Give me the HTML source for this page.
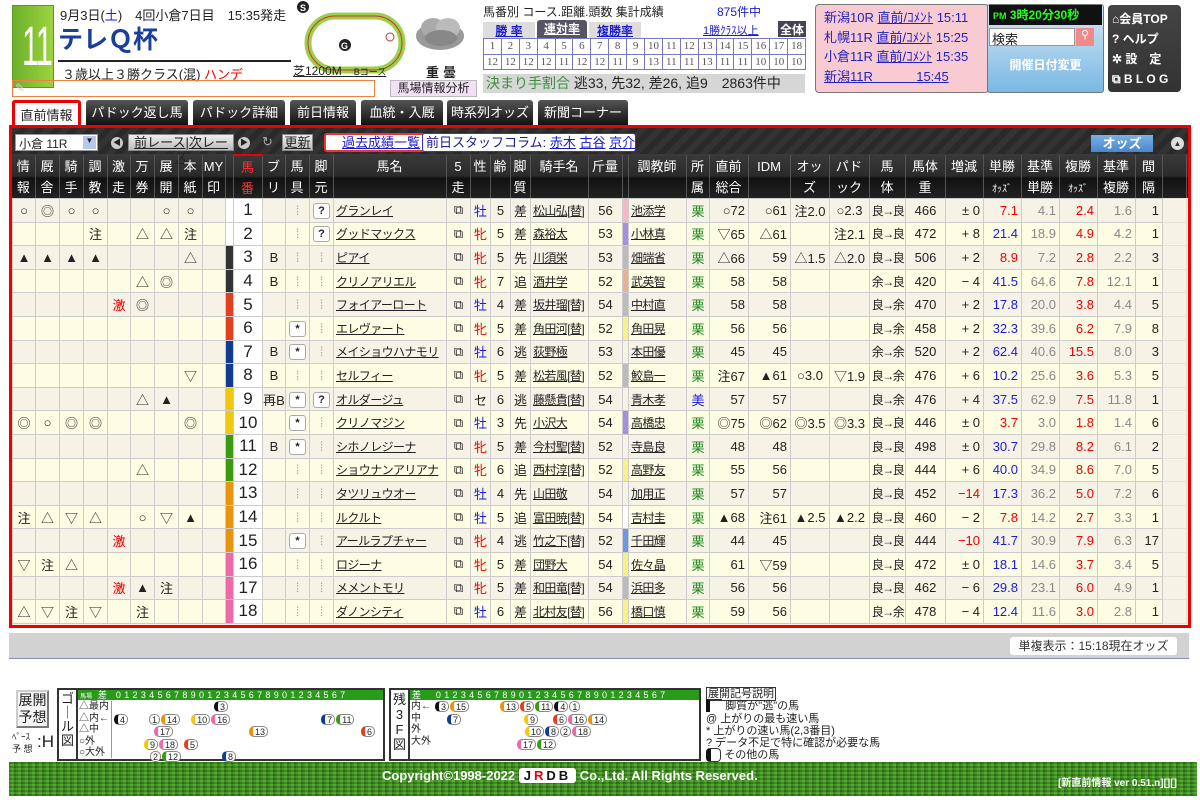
<!DOCTYPE html>
<html><head><meta charset="utf-8">
<style>
*{box-sizing:border-box;margin:0;padding:0}
body{width:1200px;height:800px;overflow:hidden;background:#fff;font-family:"Liberation Sans","Noto Sans CJK JP",sans-serif;font-size:13px;color:#222;position:relative}
.a{position:absolute}
.lk{color:#1a1ad0;text-decoration:underline}
table{border-collapse:collapse;table-layout:fixed}
#main td{border:1px solid #ccc;height:23.6px;text-align:center;white-space:nowrap;overflow:hidden;padding:0;font-size:13px}
#main tr.e td{background:#fdfde4}
#main td.n{text-align:left;padding-left:2px;text-decoration:underline;font-size:12px;letter-spacing:-0.6px}
#main td.r{text-align:right;padding-right:3px}
#main td.t{font-size:12px;letter-spacing:-1.5px}
#main td.num{font-size:17px;background:#fff!important}
#main td.bl{background:#f6f3e6!important;border-color:#e6e2d2}
.d{color:#aaa;font-size:11px}
.bx{display:inline-block;width:17px;height:16px;border:1px solid #aaa;border-radius:3px;font-size:11px;line-height:14px;background:#fff;font-weight:bold}
.b{color:#1a1ae0}.rd{color:#e00}.g{color:#888}.gr{color:#1b8a1b}
#hd td{color:#fff;text-align:center;font-size:13px;line-height:21px;height:44px;border-right:1px solid #555;vertical-align:top;padding-top:1px;white-space:nowrap}
.tab{position:absolute;top:100px;height:25px;background:linear-gradient(#555,#111);color:#fff;border-radius:3px 3px 0 0;text-align:center;line-height:25px;font-size:13px}
.gc td{border:1px solid #7777bb;width:17.9px;height:15.5px;text-align:center;font-size:11px;color:#555;font-family:"Liberation Serif",serif}
.pill{display:inline-block;height:11px;font-size:9px;line-height:10px;border:1px solid #888;border-radius:5px;padding:0 2px;margin-right:1px;background:#fff}
</style></head><body>

<!-- header left -->
<div class="a" style="left:12px;top:5px;width:42px;height:83px;background:linear-gradient(90deg,#6db02a,#9bd43f);border:1px solid #5a9a20;overflow:hidden"><div style="color:#fff;font-size:56px;line-height:80px;text-align:center;transform:scaleX(0.55);letter-spacing:-2px">11</div></div>
<div class="a" style="left:60px;top:5px;font-size:13px">9月3日(<span class="b">土</span>)　4回小倉7日目　15:35発走</div>
<div class="a" style="left:58px;top:20px;font-size:25px;font-weight:bold;color:#1a3f9a">テレＱ杯</div>
<div class="a" style="left:58px;top:60px;width:233px;height:2px;background:#222"></div>
<div class="a" style="left:62px;top:64px;font-size:13px">３歳以上３勝クラス(混) <span class="rd">ハンデ</span></div>
<div class="a" style="left:12px;top:80px;width:363px;height:17px;border:1px solid #f08040;color:#ccc;font-size:12px;padding-left:2px">✎</div>
<div class="a" style="left:390px;top:80px;width:87px;height:17px;background:#f2e0f4;border:1px solid #bbb;font-size:12px;text-align:center;line-height:15px">馬場情報分析</div>
<!-- course -->
<svg class="a" style="left:292px;top:0" width="130" height="80">
<rect x="16" y="16" width="94" height="54" rx="27" fill="none" stroke="#9ad04a" stroke-width="7"/>
<rect x="16" y="16" width="94" height="54" rx="27" fill="none" stroke="#c33" stroke-width="1"/>
<circle cx="11" cy="7" r="6" fill="#222"/><text x="8" y="11" fill="#fff" font-size="9" font-weight="bold">S</text>
<circle cx="53" cy="45" r="6" fill="#222"/><text x="49" y="49" fill="#fff" font-size="9" font-weight="bold">G</text>
<circle cx="98" cy="37" r="4" fill="none" stroke="#c33"/>
</svg>
<div class="a" style="left:293px;top:62px;font-size:12px;text-decoration:underline">芝1200M　<span style="font-size:9px">Bコース</span></div>
<svg class="a" style="left:413px;top:14px" width="55" height="40"><ellipse cx="27" cy="22" rx="24" ry="14" fill="#999"/><ellipse cx="20" cy="14" rx="12" ry="10" fill="#aaa"/><ellipse cx="35" cy="14" rx="12" ry="10" fill="#bbb"/><ellipse cx="28" cy="24" rx="16" ry="8" fill="#888"/></svg>
<div class="a" style="left:426px;top:62px;font-size:13px;font-weight:bold;letter-spacing:4px">重曇</div>

<!-- stats -->
<div class="a" style="left:483px;top:3px;font-size:12px">馬番別 コース.距離.頭数 集計成績</div>
<div class="a" style="left:717px;top:3px;font-size:12px;color:#1a1ad0">875件中</div>
<div class="a lk" style="left:483px;top:22px;width:52px;height:16px;background:#ddd;text-align:center;font-size:12px;font-weight:bold">勝 率</div>
<div class="a" style="left:537px;top:20px;width:50px;height:18px;background:#556;color:#fff;text-align:center;font-size:12px;font-weight:bold;border-radius:3px 3px 0 0;text-decoration:underline">連対率</div>
<div class="a lk" style="left:589px;top:22px;width:52px;height:16px;background:#ddd;text-align:center;font-size:12px;font-weight:bold">複勝率</div>
<div class="a lk" style="left:703px;top:22px;font-size:11px">1勝ｸﾗｽ以上</div>
<div class="a" style="left:778px;top:21px;width:28px;height:16px;background:#445;color:#fff;font-size:12px;text-align:center;font-weight:bold">全体</div>
<table class="a gc" style="left:483px;top:38px;width:322px"><tr><td>1</td><td>2</td><td>3</td><td>4</td><td>5</td><td>6</td><td>7</td><td>8</td><td>9</td><td>10</td><td>11</td><td>12</td><td>13</td><td>14</td><td>15</td><td>16</td><td>17</td><td>18</td></tr><tr><td>12</td><td>12</td><td>12</td><td>12</td><td>11</td><td>12</td><td>12</td><td>11</td><td>9</td><td>13</td><td>11</td><td>11</td><td>13</td><td>11</td><td>11</td><td>10</td><td>10</td><td>10</td></tr></table>
<div class="a" style="left:483px;top:74px;width:322px;height:19px;background:#d6d6d6;font-size:14px;line-height:19px;padding-left:3px;white-space:nowrap"><span style="color:#3b8f3b">決まり手割合</span> 逃33, 先32, 差26, 追9　2863件中</div>

<!-- pink box -->
<div class="a" style="left:815px;top:4px;width:174px;height:89px;background:#f8cbd3;border:1px solid #777;border-radius:4px;font-size:13px;color:#2222c0;line-height:19.5px;padding:3px 0 0 8px;white-space:pre">新潟10R <u>直前/ｺﾒﾝﾄ</u> 15:11
札幌11R <u>直前/ｺﾒﾝﾄ</u> 15:25
小倉11R <u>直前/ｺﾒﾝﾄ</u> 15:35
<u>新潟11R            15:45</u></div>
<div class="a" style="left:987px;top:4px;width:117px;height:89px;background:linear-gradient(#d6e8f6,#7ab8e4);border:1px solid #777;border-radius:3px"></div>
<div class="a" style="left:989px;top:5px;width:113px;height:20px;background:#111;color:#2f2;font-size:12px;font-weight:bold;line-height:20px;padding-left:4px"><span style="font-size:9px">PM</span> 3時20分30秒</div>
<div class="a" style="left:989px;top:28px;width:86px;height:18px;background:#fff;border:1px solid #999;font-size:13px;padding-left:2px">検索</div>
<div class="a" style="left:1076px;top:28px;width:18px;height:18px;background:#f08a8a;color:#fff;font-size:11px;text-align:center">⚲</div>
<div class="a" style="left:989px;top:56px;width:113px;text-align:center;color:#fff;font-size:12px;font-weight:bold">開催日付変更</div>
<div class="a" style="left:1108px;top:5px;width:73px;height:87px;background:linear-gradient(#444,#333);border-radius:4px;color:#fff;font-size:12px;font-weight:bold;line-height:20px;padding:4px 0 0 4px;white-space:pre">⌂会員TOP
? ヘルプ
✲ 設　定
⧉ B L O G</div>

<!-- tabs -->
<div class="tab" style="left:12px;width:69px;background:#fff;color:#222;border:3px solid #e00;border-bottom:none;height:28px">直前情報</div>
<div class="tab" style="left:86px;width:102px">パドック返し馬</div>
<div class="tab" style="left:193px;width:92px">パドック詳細</div>
<div class="tab" style="left:290px;width:66px">前日情報</div>
<div class="tab" style="left:361px;width:82px">血統・入厩</div>
<div class="tab" style="left:447px;width:86px">時系列オッズ</div>
<div class="tab" style="left:538px;width:90px">新聞コーナー</div>

<!-- frame -->
<div class="a" style="left:9px;top:125px;width:1182px;height:503px;border:3px solid #e00;background:#f6f3e6"></div>
<div class="a" style="left:12px;top:128px;width:1176px;height:70px;background:repeating-linear-gradient(135deg,#333 0 6px,#2a2a2a 6px 12px)"></div>
<div class="a" style="left:12px;top:154px;width:1176px;height:44px;background:linear-gradient(#3a3a3a 0,#2a2a2a 50%,#111 55%,#222 100%)"></div>
<div class="a" style="left:15px;top:134px;width:83px;height:17px;background:#fff;border:1px solid #999;font-size:12px;padding-left:3px">小倉 11R<span style="position:absolute;right:1px;top:1px;width:13px;height:13px;background:#b8c8e8;font-size:8px;text-align:center">▼</span></div>
<div class="a" style="left:111px;top:137px;width:12px;height:12px;border-radius:6px;background:#ccc;font-size:8px;text-align:center;line-height:12px">◀</div>
<div class="a" style="left:128px;top:134px;width:106px;height:17px;background:linear-gradient(#eee,#bbb);border:1px solid #888;font-size:13px;text-align:center;line-height:15px"><u>前レース</u>|<u>次レース</u></div>
<div class="a" style="left:238px;top:137px;width:12px;height:12px;border-radius:6px;background:#ccc;font-size:8px;text-align:center;line-height:12px">▶</div>
<div class="a" style="left:262px;top:134px;color:#aaa;font-size:13px">↻</div>
<div class="a" style="left:282px;top:134px;width:31px;height:17px;background:linear-gradient(#eee,#bbb);border:1px solid #888;font-size:13px;text-align:center;line-height:15px"><u>更新</u></div>
<div class="a lk" style="left:324px;top:133px;width:114px;height:19px;background:#fff;border:2px solid #e33;border-radius:3px;font-size:13px;text-align:center;line-height:15px">過去成績一覧</div>
<div class="a" style="left:422px;top:133px;width:214px;height:19px;background:#fff;border:1px solid #33c;border-radius:3px;font-size:13px;color:#1a1a90;padding-left:3px;line-height:17px;white-space:nowrap">前日スタッフコラム: <span class="lk">赤木</span> <span class="lk">古谷</span> <span class="lk">京介</span></div>
<div class="a" style="left:1091px;top:135px;width:62px;height:17px;background:linear-gradient(#7ab0e6,#4a86cc);color:#fff;font-weight:bold;text-align:center;font-size:13px;line-height:17px">オッズ</div>
<div class="a" style="left:1171px;top:137px;width:13px;height:13px;border-radius:7px;background:#ddd;font-size:8px;text-align:center;line-height:13px;color:#333">▲</div>

<table id="hd" class="a" style="left:12px;top:154px;width:1174px">
<colgroup><col style="width:23px"><col style="width:24px"><col style="width:24px"><col style="width:24px"><col style="width:23px"><col style="width:24px"><col style="width:24px"><col style="width:24px"><col style="width:23px"><col style="width:8px"><col style="width:29px"><col style="width:23px"><col style="width:24px"><col style="width:24px"><col style="width:113px"><col style="width:24px"><col style="width:20px"><col style="width:20px"><col style="width:20px"><col style="width:58px"><col style="width:34px"><col style="width:6px"><col style="width:58px"><col style="width:23px"><col style="width:39px"><col style="width:42px"><col style="width:39px"><col style="width:40px"><col style="width:36px"><col style="width:40px"><col style="width:38px"><col style="width:38px"><col style="width:38px"><col style="width:38px"><col style="width:38px"><col style="width:27px"><col style="width:24px"></colgroup>
<tr><td>情<br>報</td><td>厩<br>舎</td><td>騎<br>手</td><td>調<br>教</td><td>激<br>走</td><td>万<br>券</td><td>展<br>開</td><td>本<br>紙</td><td>MY<br>印</td><td></td><td style="color:#f33;border-top:2px solid #e00;border-bottom:2px solid #e00">馬<br>番</td><td>ブ<br>リ</td><td>馬<br>具</td><td>脚<br>元</td><td>馬名</td><td>5<br>走</td><td>性</td><td>齢</td><td>脚<br>質</td><td>騎手名</td><td>斤量</td><td></td><td>調教師</td><td>所<br>属</td><td>直前<br>総合</td><td>IDM</td><td>オッ<br>ズ</td><td>パド<br>ック</td><td>馬<br>体</td><td>馬体<br>重</td><td>増減</td><td>単勝<br><span style="font-size:10px">ｵｯｽﾞ</span></td><td>基準<br>単勝</td><td>複勝<br><span style="font-size:10px">ｵｯｽﾞ</span></td><td>基準<br>複勝</td><td>間<br>隔</td><td></td></tr></table>

<table id="main" class="a" style="left:12px;top:198px;width:1174px">
<colgroup><col style="width:23px"><col style="width:24px"><col style="width:24px"><col style="width:24px"><col style="width:23px"><col style="width:24px"><col style="width:24px"><col style="width:24px"><col style="width:23px"><col style="width:8px"><col style="width:29px"><col style="width:23px"><col style="width:24px"><col style="width:24px"><col style="width:113px"><col style="width:24px"><col style="width:20px"><col style="width:20px"><col style="width:20px"><col style="width:58px"><col style="width:34px"><col style="width:6px"><col style="width:58px"><col style="width:23px"><col style="width:39px"><col style="width:42px"><col style="width:39px"><col style="width:40px"><col style="width:36px"><col style="width:40px"><col style="width:38px"><col style="width:38px"><col style="width:38px"><col style="width:38px"><col style="width:38px"><col style="width:27px"><col style="width:24px"></colgroup>
<tr><td>○</td><td>◎</td><td>○</td><td>○</td><td></td><td></td><td>○</td><td>○</td><td></td><td style="background:#fff"></td><td class="num">1</td><td></td><td class="d">⁞</td><td><span class="bx">?</span></td><td class="n">グランレイ</td><td>⧉</td><td class="b">牡</td><td>5</td><td>差</td><td class="n">松山弘[替]</td><td>56</td><td style="background:#f4b8c8"></td><td class="n">池添学</td><td class="gr">栗</td><td class="r">○72</td><td class="r">○61</td><td>注2.0</td><td>○2.3</td><td class="t">良→良</td><td>466</td><td class="r">± 0</td><td class="r rd">7.1</td><td class="r g">4.1</td><td class="r rd">2.4</td><td class="r g">1.6</td><td class="r">1</td><td class="bl"></td></tr>
<tr class="e"><td></td><td></td><td></td><td>注</td><td></td><td>△</td><td>△</td><td>注</td><td></td><td style="background:#fff!important"></td><td class="num">2</td><td></td><td class="d">⁞</td><td><span class="bx">?</span></td><td class="n">グッドマックス</td><td>⧉</td><td class="rd">牝</td><td>5</td><td>差</td><td class="n">森裕太</td><td>53</td><td style="background:#a58fe0!important"></td><td class="n">小林真</td><td class="gr">栗</td><td class="r">▽65</td><td class="r">△61</td><td></td><td>注2.1</td><td class="t">良→良</td><td>472</td><td class="r">+ 8</td><td class="r b">21.4</td><td class="r g">18.9</td><td class="r rd">4.9</td><td class="r g">4.2</td><td class="r">1</td><td class="bl"></td></tr>
<tr><td>▲</td><td>▲</td><td>▲</td><td>▲</td><td></td><td></td><td></td><td>△</td><td></td><td style="background:#333"></td><td class="num">3</td><td>B</td><td class="d">⁞</td><td class="d">⁞</td><td class="n">ピアイ</td><td>⧉</td><td class="rd">牝</td><td>5</td><td>先</td><td class="n">川須栄</td><td>53</td><td style="background:#bbb"></td><td class="n">畑端省</td><td class="gr">栗</td><td class="r">△66</td><td class="r">59</td><td>△1.5</td><td>△2.0</td><td class="t">良→良</td><td>506</td><td class="r">+ 2</td><td class="r rd">8.9</td><td class="r g">7.2</td><td class="r rd">2.8</td><td class="r g">2.2</td><td class="r">3</td><td class="bl"></td></tr>
<tr class="e"><td></td><td></td><td></td><td></td><td></td><td>△</td><td>◎</td><td></td><td></td><td style="background:#333!important"></td><td class="num">4</td><td>B</td><td class="d">⁞</td><td class="d">⁞</td><td class="n">クリノアリエル</td><td>⧉</td><td class="rd">牝</td><td>7</td><td>追</td><td class="n">酒井学</td><td>52</td><td style="background:#e8b090!important"></td><td class="n">武英智</td><td class="gr">栗</td><td class="r">58</td><td class="r">58</td><td></td><td></td><td class="t">余→良</td><td>420</td><td class="r">− 4</td><td class="r b">41.5</td><td class="r g">64.6</td><td class="r rd">7.8</td><td class="r g">12.1</td><td class="r">1</td><td class="bl"></td></tr>
<tr><td></td><td></td><td></td><td></td><td class="rd">激</td><td>◎</td><td></td><td></td><td></td><td style="background:#e04020"></td><td class="num">5</td><td></td><td class="d">⁞</td><td class="d">⁞</td><td class="n">フォイアーロート</td><td>⧉</td><td class="b">牡</td><td>4</td><td>差</td><td class="n">坂井瑠[替]</td><td>54</td><td style="background:#bbb"></td><td class="n">中村直</td><td class="gr">栗</td><td class="r">58</td><td class="r">58</td><td></td><td></td><td class="t">良→余</td><td>470</td><td class="r">+ 2</td><td class="r b">17.8</td><td class="r g">20.0</td><td class="r rd">3.8</td><td class="r g">4.4</td><td class="r">5</td><td class="bl"></td></tr>
<tr class="e"><td></td><td></td><td></td><td></td><td></td><td></td><td></td><td></td><td></td><td style="background:#e04020!important"></td><td class="num">6</td><td></td><td><span class="bx">*</span></td><td class="d">⁞</td><td class="n">エレヴァート</td><td>⧉</td><td class="rd">牝</td><td>5</td><td>差</td><td class="n">角田河[替]</td><td>52</td><td style="background:#f8f088!important"></td><td class="n">角田晃</td><td class="gr">栗</td><td class="r">56</td><td class="r">56</td><td></td><td></td><td class="t">良→余</td><td>458</td><td class="r">+ 2</td><td class="r b">32.3</td><td class="r g">39.6</td><td class="r rd">6.2</td><td class="r g">7.9</td><td class="r">8</td><td class="bl"></td></tr>
<tr><td></td><td></td><td></td><td></td><td></td><td></td><td></td><td></td><td></td><td style="background:#123c94"></td><td class="num">7</td><td>B</td><td><span class="bx">*</span></td><td class="d">⁞</td><td class="n">メイショウハナモリ</td><td>⧉</td><td class="b">牡</td><td>6</td><td>逃</td><td class="n">荻野極</td><td>53</td><td></td><td class="n">本田優</td><td class="gr">栗</td><td class="r">45</td><td class="r">45</td><td></td><td></td><td class="t">余→余</td><td>520</td><td class="r">+ 2</td><td class="r b">62.4</td><td class="r g">40.6</td><td class="r rd">15.5</td><td class="r g">8.0</td><td class="r">3</td><td class="bl"></td></tr>
<tr class="e"><td></td><td></td><td></td><td></td><td></td><td></td><td></td><td>▽</td><td></td><td style="background:#123c94!important"></td><td class="num">8</td><td>B</td><td class="d">⁞</td><td class="d">⁞</td><td class="n">セルフィー</td><td>⧉</td><td class="rd">牝</td><td>5</td><td>差</td><td class="n">松若風[替]</td><td>52</td><td style="background:#bbb!important"></td><td class="n">鮫島一</td><td class="gr">栗</td><td class="r">注67</td><td class="r">▲61</td><td>○3.0</td><td>▽1.9</td><td class="t">良→余</td><td>476</td><td class="r">+ 6</td><td class="r b">10.2</td><td class="r g">25.6</td><td class="r rd">3.6</td><td class="r g">5.3</td><td class="r">5</td><td class="bl"></td></tr>
<tr><td></td><td></td><td></td><td></td><td></td><td>△</td><td>▲</td><td></td><td></td><td style="background:#f0c810"></td><td class="num">9</td><td>再B</td><td><span class="bx">*</span></td><td><span class="bx">?</span></td><td class="n">オルダージュ</td><td>⧉</td><td>セ</td><td>6</td><td>逃</td><td class="n">藤懸貴[替]</td><td>54</td><td></td><td class="n">青木孝</td><td class="b">美</td><td class="r">57</td><td class="r">57</td><td></td><td></td><td class="t">良→余</td><td>476</td><td class="r">+ 4</td><td class="r b">37.5</td><td class="r g">62.9</td><td class="r rd">7.5</td><td class="r g">11.8</td><td class="r">1</td><td class="bl"></td></tr>
<tr class="e"><td>◎</td><td>○</td><td>◎</td><td>◎</td><td></td><td></td><td></td><td>◎</td><td></td><td style="background:#f0c810!important"></td><td class="num">10</td><td></td><td><span class="bx">*</span></td><td class="d">⁞</td><td class="n">クリノマジン</td><td>⧉</td><td class="b">牡</td><td>3</td><td>先</td><td class="n">小沢大</td><td>54</td><td style="background:#a58fe0!important"></td><td class="n">高橋忠</td><td class="gr">栗</td><td class="r">◎75</td><td class="r">◎62</td><td>◎3.5</td><td>◎3.3</td><td class="t">良→良</td><td>446</td><td class="r">± 0</td><td class="r rd">3.7</td><td class="r g">3.0</td><td class="r rd">1.8</td><td class="r g">1.4</td><td class="r">6</td><td class="bl"></td></tr>
<tr><td></td><td></td><td></td><td></td><td></td><td></td><td></td><td></td><td></td><td style="background:#3a9a10"></td><td class="num">11</td><td>B</td><td><span class="bx">*</span></td><td class="d">⁞</td><td class="n">シホノレジーナ</td><td>⧉</td><td class="rd">牝</td><td>5</td><td>差</td><td class="n">今村聖[替]</td><td>52</td><td></td><td class="n">寺島良</td><td class="gr">栗</td><td class="r">48</td><td class="r">48</td><td></td><td></td><td class="t">良→良</td><td>498</td><td class="r">± 0</td><td class="r b">30.7</td><td class="r g">29.8</td><td class="r rd">8.2</td><td class="r g">6.1</td><td class="r">2</td><td class="bl"></td></tr>
<tr class="e"><td></td><td></td><td></td><td></td><td></td><td>△</td><td></td><td></td><td></td><td style="background:#3a9a10!important"></td><td class="num">12</td><td></td><td class="d">⁞</td><td class="d">⁞</td><td class="n">ショウナンアリアナ</td><td>⧉</td><td class="rd">牝</td><td>6</td><td>追</td><td class="n">西村淳[替]</td><td>52</td><td style="background:#f8f088!important"></td><td class="n">高野友</td><td class="gr">栗</td><td class="r">55</td><td class="r">56</td><td></td><td></td><td class="t">良→良</td><td>444</td><td class="r">+ 6</td><td class="r b">40.0</td><td class="r g">34.9</td><td class="r rd">8.6</td><td class="r g">7.0</td><td class="r">5</td><td class="bl"></td></tr>
<tr><td></td><td></td><td></td><td></td><td></td><td></td><td></td><td></td><td></td><td style="background:#e89410"></td><td class="num">13</td><td></td><td class="d">⁞</td><td class="d">⁞</td><td class="n">タツリュウオー</td><td>⧉</td><td class="b">牡</td><td>4</td><td>先</td><td class="n">山田敬</td><td>54</td><td></td><td class="n">加用正</td><td class="gr">栗</td><td class="r">57</td><td class="r">57</td><td></td><td></td><td class="t">良→良</td><td>452</td><td class="r rd">−14</td><td class="r b">17.3</td><td class="r g">36.2</td><td class="r rd">5.0</td><td class="r g">7.2</td><td class="r">6</td><td class="bl"></td></tr>
<tr class="e"><td>注</td><td>△</td><td>▽</td><td>△</td><td></td><td>○</td><td>▽</td><td>▲</td><td></td><td style="background:#e89410!important"></td><td class="num">14</td><td></td><td class="d">⁞</td><td class="d">⁞</td><td class="n">ルクルト</td><td>⧉</td><td class="b">牡</td><td>5</td><td>追</td><td class="n">富田暁[替]</td><td>54</td><td style="background:#fff!important"></td><td class="n">吉村圭</td><td class="gr">栗</td><td class="r">▲68</td><td class="r">注61</td><td>▲2.5</td><td>▲2.2</td><td class="t">良→良</td><td>460</td><td class="r">− 2</td><td class="r rd">7.8</td><td class="r g">14.2</td><td class="r rd">2.7</td><td class="r g">3.3</td><td class="r">1</td><td class="bl"></td></tr>
<tr><td></td><td></td><td></td><td></td><td class="rd">激</td><td></td><td></td><td></td><td></td><td style="background:#e89410"></td><td class="num">15</td><td></td><td><span class="bx">*</span></td><td class="d">⁞</td><td class="n">アールラプチャー</td><td>⧉</td><td class="rd">牝</td><td>4</td><td>逃</td><td class="n">竹之下[替]</td><td>52</td><td style="background:#6a9ae0"></td><td class="n">千田輝</td><td class="gr">栗</td><td class="r">44</td><td class="r">45</td><td></td><td></td><td class="t">良→良</td><td>444</td><td class="r rd">−10</td><td class="r b">41.7</td><td class="r g">30.9</td><td class="r rd">7.9</td><td class="r g">6.3</td><td class="r">17</td><td class="bl"></td></tr>
<tr class="e"><td>▽</td><td>注</td><td>△</td><td></td><td></td><td></td><td></td><td></td><td></td><td style="background:#ec6aa8!important"></td><td class="num">16</td><td></td><td class="d">⁞</td><td class="d">⁞</td><td class="n">ロジーナ</td><td>⧉</td><td class="rd">牝</td><td>5</td><td>差</td><td class="n">団野大</td><td>54</td><td style="background:#f8f088!important"></td><td class="n">佐々晶</td><td class="gr">栗</td><td class="r">61</td><td class="r">▽59</td><td></td><td></td><td class="t">良→良</td><td>472</td><td class="r">± 0</td><td class="r b">18.1</td><td class="r g">14.6</td><td class="r rd">3.7</td><td class="r g">3.4</td><td class="r">5</td><td class="bl"></td></tr>
<tr><td></td><td></td><td></td><td></td><td class="rd">激</td><td>▲</td><td>注</td><td></td><td></td><td style="background:#ec6aa8"></td><td class="num">17</td><td></td><td class="d">⁞</td><td class="d">⁞</td><td class="n">メメントモリ</td><td>⧉</td><td class="rd">牝</td><td>5</td><td>差</td><td class="n">和田竜[替]</td><td>54</td><td style="background:#bbb"></td><td class="n">浜田多</td><td class="gr">栗</td><td class="r">56</td><td class="r">56</td><td></td><td></td><td class="t">良→良</td><td>462</td><td class="r">− 6</td><td class="r b">29.8</td><td class="r g">23.1</td><td class="r rd">6.0</td><td class="r g">4.9</td><td class="r">1</td><td class="bl"></td></tr>
<tr class="e"><td>△</td><td>▽</td><td>注</td><td>▽</td><td></td><td>注</td><td></td><td></td><td></td><td style="background:#ec6aa8!important"></td><td class="num">18</td><td></td><td class="d">⁞</td><td class="d">⁞</td><td class="n">ダノンシティ</td><td>⧉</td><td class="b">牡</td><td>6</td><td>差</td><td class="n">北村友[替]</td><td>56</td><td style="background:#f8f088!important"></td><td class="n">橋口慎</td><td class="gr">栗</td><td class="r">59</td><td class="r">56</td><td></td><td></td><td class="t">良→余</td><td>478</td><td class="r">− 4</td><td class="r b">12.4</td><td class="r g">11.6</td><td class="r rd">3.0</td><td class="r g">2.8</td><td class="r">1</td><td class="bl"></td></tr>
</table>

<!-- gray bar -->
<div class="a" style="left:9px;top:633px;width:1180px;height:26px;background:#d2d2d2;border-bottom:1px solid #8890a8"></div>
<div class="a" style="left:1010px;top:637px;width:167px;height:18px;background:#fff;border-radius:3px;font-size:12px;text-align:center;line-height:18px;color:#333">単複表示：15:18現在オッズ</div>

<!-- tenkai -->
<div class="a" style="left:16px;top:690px;width:33px;height:38px;border:2px outset #ccc;background:#f4f4f4;font-size:14px;line-height:17px;text-align:center">展開<br>予想</div>
<div class="a" style="left:12px;top:731px;font-size:9px;line-height:12px">ﾍﾟｰｽ<br>予 想</div>
<div class="a" style="left:37px;top:732px;font-size:17px">:H</div>

<div class="a" style="left:57px;top:688px;width:328px;height:73px;border:2px solid #333;background:#fff"></div>
<div class="a" style="left:59px;top:690px;width:19px;height:69px;border-right:2px solid #333;font-size:13px;line-height:14px;text-align:center;padding-top:2px">ゴ<br>｜<br>ル<br>図</div>
<div class="a" style="left:78px;top:690px;width:305px;height:10px;background:#2a9a1a;color:#fff;font-size:9px;line-height:10px;white-space:nowrap;letter-spacing:3.3px;padding-left:2px"><span style="font-size:6px;letter-spacing:0">馬場</span> 差 0123456789012345678901234567</div>
<div class="a" style="left:79px;top:701px;width:33px;font-size:10px;line-height:11.5px;border-right:1px solid #999;height:57px">△最内<br>△内←<br>△中<br>○外<br>○大外</div>
<div class="a" style="left:114px;top:701px;width:268px;font-size:9px;line-height:11.5px;white-space:nowrap">
<div style="padding-left:100px"><span class="pill" style="border-left:4px solid #111">3</span></div>
<div><span class="pill" style="border-left:4px solid #111">4</span>&nbsp;&nbsp;&nbsp;&nbsp;&nbsp;&nbsp;&nbsp;&nbsp;<span class="pill">1</span><span class="pill" style="border-left:4px solid #e89410">14</span>&nbsp;&nbsp;&nbsp;&nbsp;<span class="pill" style="border-left:4px solid #f0c810">10</span><span class="pill" style="border-left:4px solid #ec6aa8">16</span><span style="padding-left:90px"></span><span class="pill" style="border-left:4px solid #123c94">7</span><span class="pill" style="border-left:4px solid #3a9a10">11</span></div>
<div style="padding-left:40px"><span class="pill" style="border-left:4px solid #ec6aa8">17</span><span style="padding-left:75px"></span><span class="pill" style="border-left:4px solid #e89410">13</span><span style="padding-left:92px"></span><span class="pill" style="border-left:4px solid #e04020">6</span></div>
<div style="padding-left:30px"><span class="pill" style="border-left:4px solid #f0c810">9</span><span class="pill" style="border-left:4px solid #ec6aa8">18</span>&nbsp;&nbsp;<span class="pill" style="border-left:4px solid #e04020">5</span></div>
<div style="padding-left:36px"><span class="pill">2</span><span class="pill" style="border-left:4px solid #3a9a10">12</span><span style="padding-left:40px"></span><span class="pill" style="border-left:4px solid #123c94">8</span></div>
</div>

<div class="a" style="left:389px;top:688px;width:312px;height:73px;border:2px solid #333;background:#fff"></div>
<div class="a" style="left:391px;top:690px;width:19px;height:69px;border-right:2px solid #333;font-size:13px;line-height:15px;text-align:center;padding-top:2px">残<br>3<br>F<br>図</div>
<div class="a" style="left:410px;top:690px;width:289px;height:10px;background:#2a9a1a;color:#fff;font-size:9px;line-height:10px;white-space:nowrap;letter-spacing:3.3px;padding-left:2px">差&nbsp;&nbsp;0123456789012345678901234567</div>
<div class="a" style="left:411px;top:701px;width:30px;font-size:10px;line-height:11.5px">内←<br>中<br>外<br>大外</div>
<div class="a" style="left:435px;top:701px;width:262px;font-size:9px;line-height:11.5px;white-space:nowrap">
<div><span class="pill" style="border-left:4px solid #111">3</span><span class="pill" style="border-left:4px solid #e89410">15</span><span style="padding-left:30px"></span><span class="pill" style="border-left:4px solid #e89410">13</span><span class="pill" style="border-left:4px solid #e04020">5</span><span class="pill" style="border-left:4px solid #3a9a10">11</span><span class="pill" style="border-left:4px solid #111">4</span><span class="pill">1</span></div>
<div style="padding-left:12px"><span class="pill" style="border-left:4px solid #123c94">7</span><span style="padding-left:62px"></span><span class="pill" style="border-left:4px solid #f0c810">9</span><span style="padding-left:14px"></span><span class="pill" style="border-left:4px solid #e04020">6</span><span class="pill" style="border-left:4px solid #ec6aa8">16</span><span class="pill" style="border-left:4px solid #e89410">14</span></div>
<div style="padding-left:90px"><span class="pill" style="border-left:4px solid #f0c810">10</span><span class="pill" style="border-left:4px solid #123c94">8</span><span class="pill">2</span><span class="pill" style="border-left:4px solid #ec6aa8">18</span></div>
<div style="padding-left:82px"><span class="pill" style="border-left:4px solid #ec6aa8">17</span><span class="pill" style="border-left:4px solid #3a9a10">12</span></div>
</div>

<div class="a" style="left:706px;top:688px;font-size:11px;line-height:12.3px;white-space:nowrap"><span style="border:1px solid #333;padding:0 1px">展開記号説明</span><br><span style="border-left:4px solid #111;border-top:1px solid #333">&nbsp;&nbsp;&nbsp;&nbsp;</span> 脚質が"逃"の馬<br>@ 上がりの最も速い馬<br>* 上がりの速い馬(2,3番目)<br>? データ不足で特に確認が必要な馬<br><span style="border:1px solid #333;border-left:5px solid #111;border-radius:4px">&nbsp;&nbsp;&nbsp;</span> その他の馬</div>

<!-- footer -->
<div class="a" style="left:9px;top:762px;width:1188px;height:34px;background:repeating-linear-gradient(90deg,#3f8c22 0 2px,#4fa52d 2px 5px,#367a1c 5px 7px),#4a9a28"></div>
<div class="a" style="left:9px;top:762px;width:1188px;height:34px;background:repeating-linear-gradient(0deg,rgba(20,60,10,.25) 0 2px,rgba(120,200,80,.15) 2px 4px)"></div>
<div class="a" style="left:382px;top:767px;color:#fff;font-weight:bold;font-size:13px;white-space:nowrap;line-height:18px">Copyright©1998-2022 <span style="background:#fff;color:#111;border-radius:3px;padding:0 5px;letter-spacing:3px">J<span style="color:#e00">R</span>DB</span> Co.,Ltd. All Rights Reserved.</div>
<div class="a" style="left:1058px;top:774px;color:#fff;font-weight:bold;font-size:10px;white-space:nowrap">[新直前情報 ver 0.51.n][][]</div>
</body></html>
